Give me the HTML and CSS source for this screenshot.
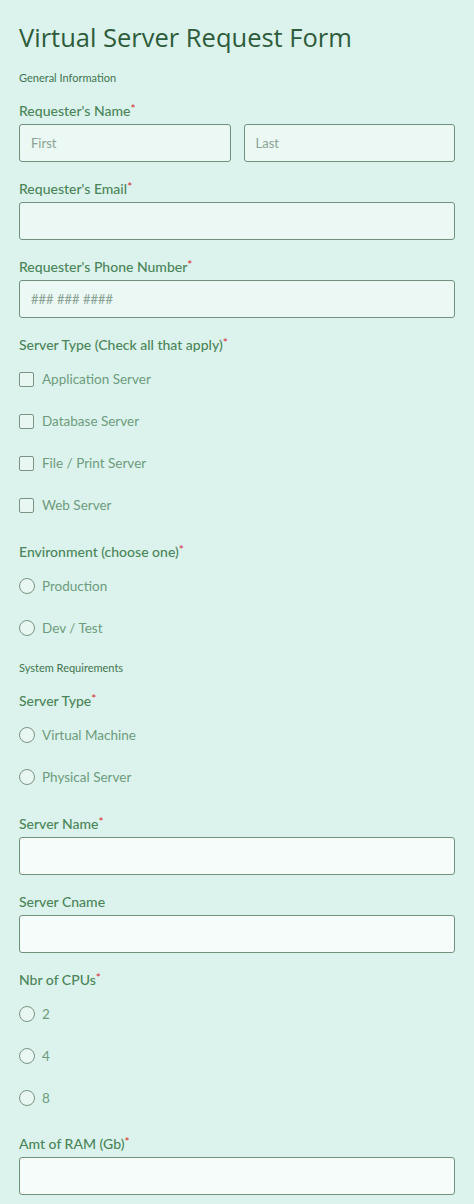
FILE: index.html
```html
<!DOCTYPE html>
<html>
<head>
<meta charset="utf-8">
<link rel="stylesheet" href="styles.css">
</head>
<body>
<form class="form">
  <h1 class="title">Virtual Server Request Form</h1>
  <div class="section">General Information</div>

  <div class="field">
    <label class="label">Requester's Name<span class="req">*</span></label>
    <div class="row2">
      <div class="input input-top placeholder">First</div>
      <div class="input input-top placeholder">Last</div>
    </div>
  </div>

  <div class="field">
    <label class="label">Requester's Email<span class="req">*</span></label>
    <div class="input input-top"></div>
  </div>

  <div class="field">
    <label class="label">Requester's Phone Number<span class="req">*</span></label>
    <div class="input input-top placeholder">### ### ####</div>
  </div>

  <div class="field field-opts">
    <label class="label">Server Type (Check all that apply)<span class="req">*</span></label>
    <div class="opt"><span class="box"></span>Application Server</div>
    <div class="opt"><span class="box"></span>Database Server</div>
    <div class="opt"><span class="box"></span>File / Print Server</div>
    <div class="opt"><span class="box"></span>Web Server</div>
  </div>

  <div class="field field-opts field-last-opts">
    <label class="label">Environment (choose one)<span class="req">*</span></label>
    <div class="opt"><span class="radio"></span>Production</div>
    <div class="opt"><span class="radio"></span>Dev / Test</div>
  </div>

  <div class="section">System Requirements</div>

  <div class="field field-opts">
    <label class="label">Server Type<span class="req">*</span></label>
    <div class="opt"><span class="radio"></span>Virtual Machine</div>
    <div class="opt"><span class="radio"></span>Physical Server</div>
  </div>

  <div class="field">
    <label class="label">Server Name<span class="req">*</span></label>
    <div class="input"></div>
  </div>

  <div class="field">
    <label class="label">Server Cname</label>
    <div class="input"></div>
  </div>

  <div class="field field-opts">
    <label class="label">Nbr of CPUs<span class="req">*</span></label>
    <div class="opt"><span class="radio"></span>2</div>
    <div class="opt"><span class="radio"></span>4</div>
    <div class="opt"><span class="radio"></span>8</div>
  </div>

  <div class="field">
    <label class="label">Amt of RAM (Gb)<span class="req">*</span></label>
    <div class="input"></div>
  </div>
</form>
</body>
</html>
```

FILE: styles.css
```css
html, body {
  margin: 0;
  padding: 0;
  background: #dbf3ec;
}
body {
  font-family: Lato, "Open Sans", sans-serif;
  color: #4b8058;
}
.form {
  padding: 21px 19px 20px 19px;
  display: flex;
  flex-direction: column;
}
.title {
  margin: 0;
  font-family: "Open Sans", sans-serif;
  font-weight: 400;
  font-size: 25.5px;
  line-height: 32px;
  color: #2e5c3b;
}
.section {
  margin-top: 18px;
  font-size: 11px;
  line-height: 14px;
  color: #41744f;
  margin-bottom: 17px;
}
.field-last-opts + .section {
  margin-top: -4px;
}
.field {
  display: flex;
  flex-direction: column;
  margin-bottom: 18px;
}
.field-opts {
  margin-bottom: 16.5px;
}
.label {
  font-size: 14px;
  line-height: 18px;
  font-weight: 500;
  color: #4b855a;
  margin-bottom: 4px;
}
.req {
  color: #d9343a;
  font-size: 12px;
  vertical-align: top;
  line-height: 14px;
}
.row2 {
  display: grid;
  grid-template-columns: 1fr 1fr;
  gap: 13px;
}
.input {
  box-sizing: border-box;
  height: 38px;
  border: 1px solid #71917f;
  border-radius: 3px;
  background: #f5fcfa;
  padding: 0 11px;
  display: flex;
  align-items: center;
  font-size: 13px;
}
.input-top {
  background: #ebf8f3;
}
.placeholder {
  color: #89a395;
}
.opt {
  height: 42px;
  display: flex;
  align-items: center;
  font-size: 13.5px;
  color: #6e9b7d;
}
.box {
  box-sizing: border-box;
  width: 15px;
  height: 15px;
  border: 1.5px solid #7a9385;
  border-radius: 2px;
  margin-right: 8px;
  background: #e9f7f2;
}
.radio {
  box-sizing: border-box;
  width: 16px;
  height: 16px;
  border: 1.5px solid #7a9385;
  border-radius: 50%;
  margin-right: 7px;
  background: #e9f7f2;
}
```
